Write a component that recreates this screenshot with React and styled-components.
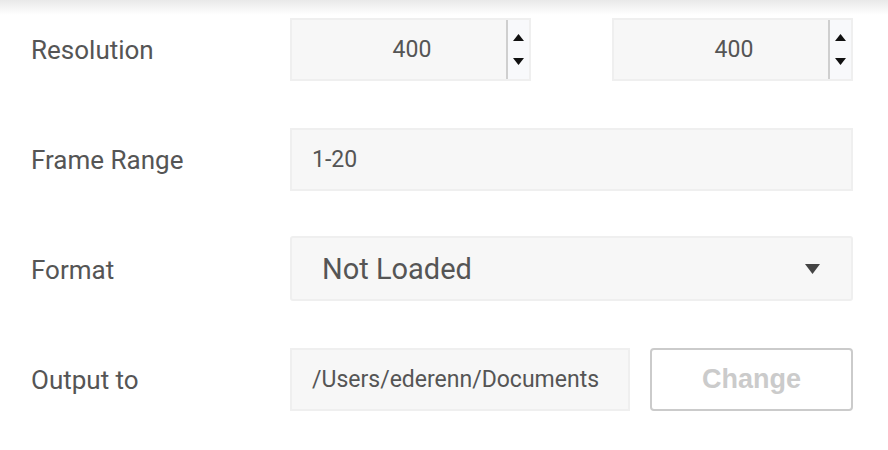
import React from "react";
import styled, { createGlobalStyle } from "styled-components";

const GlobalStyle = createGlobalStyle`
  body {
    margin: 0;
    background: #fff;
    font-family: Roboto, "Liberation Sans", sans-serif;
  }
`;

const Page = styled.div`
  width: 888px;
  height: 450px;
  overflow: hidden;
`;

const TopShadow = styled.div`
  height: 15px;
  background: linear-gradient(#e9e9e9, #fff);
`;

const Form = styled.div`
  display: flex;
  flex-direction: column;
  gap: 47px;
  padding: 3px 35px 0 31px;
`;

const Row = styled.div`
  display: grid;
  grid-template-columns: 259px 1fr;
  align-items: center;
  height: 63px;
`;

const Label = styled.div`
  font-size: 26px;
  color: #555;
`;

const Pair = styled.div`
  display: flex;
  gap: ${(p) => p.gap || 20}px;
  height: 100%;
  align-items: center;
`;

const Field = styled.div`
  box-sizing: border-box;
  flex: ${(p) => (p.width ? "none" : "1")};
  width: ${(p) => (p.width ? p.width + "px" : "auto")};
  height: ${(p) => p.height || 63}px;
  display: flex;
  align-items: center;
  background: #f7f7f7;
  border: 2px solid #efefef;
  border-radius: ${(p) => p.radius || 0}px;
  padding-left: ${(p) => p.indent || 20}px;
  font-size: ${(p) => p.size || 23}px;
  color: #555;
`;

const NumberBox = styled(Field)`
  padding-left: 0;
`;

const NumberValue = styled.span`
  flex: 1;
  text-align: center;
  padding-left: 26px;
`;

const Spinner = styled.div`
  width: 23px;
  height: 100%;
  border-left: 2px solid #cfcfcf;
  background: #f8f9fb;
  display: flex;
  flex-direction: column;
  align-items: center;
  justify-content: space-between;
  padding: 14px 0;
  box-sizing: border-box;
`;

const Select = styled(Field)`
  justify-content: space-between;
  padding-right: 31px;
  padding-left: 30px;
  margin-top: -2px;
`;

const ChangeButton = styled.button`
  box-sizing: border-box;
  width: 203px;
  height: 63px;
  border: 2px solid #cbcbcb;
  border-radius: 4px;
  background: #fff;
  color: #cbcbcb;
  font-family: "Liberation Sans", Arial, sans-serif;
  font-weight: bold;
  font-size: 27px;
  padding: 0;
`;

const Tri = ({ down, w = 11, h = 7, color = "#111" }) => (
  <svg width={w} height={h} viewBox="0 0 10 7" preserveAspectRatio="none">
    <path d={down ? "M0 0h10L5 7z" : "M5 0l5 7H0z"} fill={color} />
  </svg>
);

const NumberInput = ({ value }) => (
  <NumberBox width={241}>
    <NumberValue>{value}</NumberValue>
    <Spinner>
      <Tri />
      <Tri down />
    </Spinner>
  </NumberBox>
);

export default function App() {
  return (
    <Page>
      <GlobalStyle />
      <TopShadow />
      <Form>
        <Row>
          <Label>Resolution</Label>
          <Pair gap={81}>
            <NumberInput value="400" />
            <NumberInput value="400" />
          </Pair>
        </Row>
        <Row>
          <Label>Frame Range</Label>
          <Field>1-20</Field>
        </Row>
        <Row>
          <Label>Format</Label>
          <Select height={65} radius={3} size={29}>
            <span>Not Loaded</span>
            <Tri down w={15} h={10} color="#444" />
          </Select>
        </Row>
        <Row>
          <Label>Output to</Label>
          <Pair>
            <Field width={340}>/Users/ederenn/Documents</Field>
            <ChangeButton>Change</ChangeButton>
          </Pair>
        </Row>
      </Form>
    </Page>
  );
}
